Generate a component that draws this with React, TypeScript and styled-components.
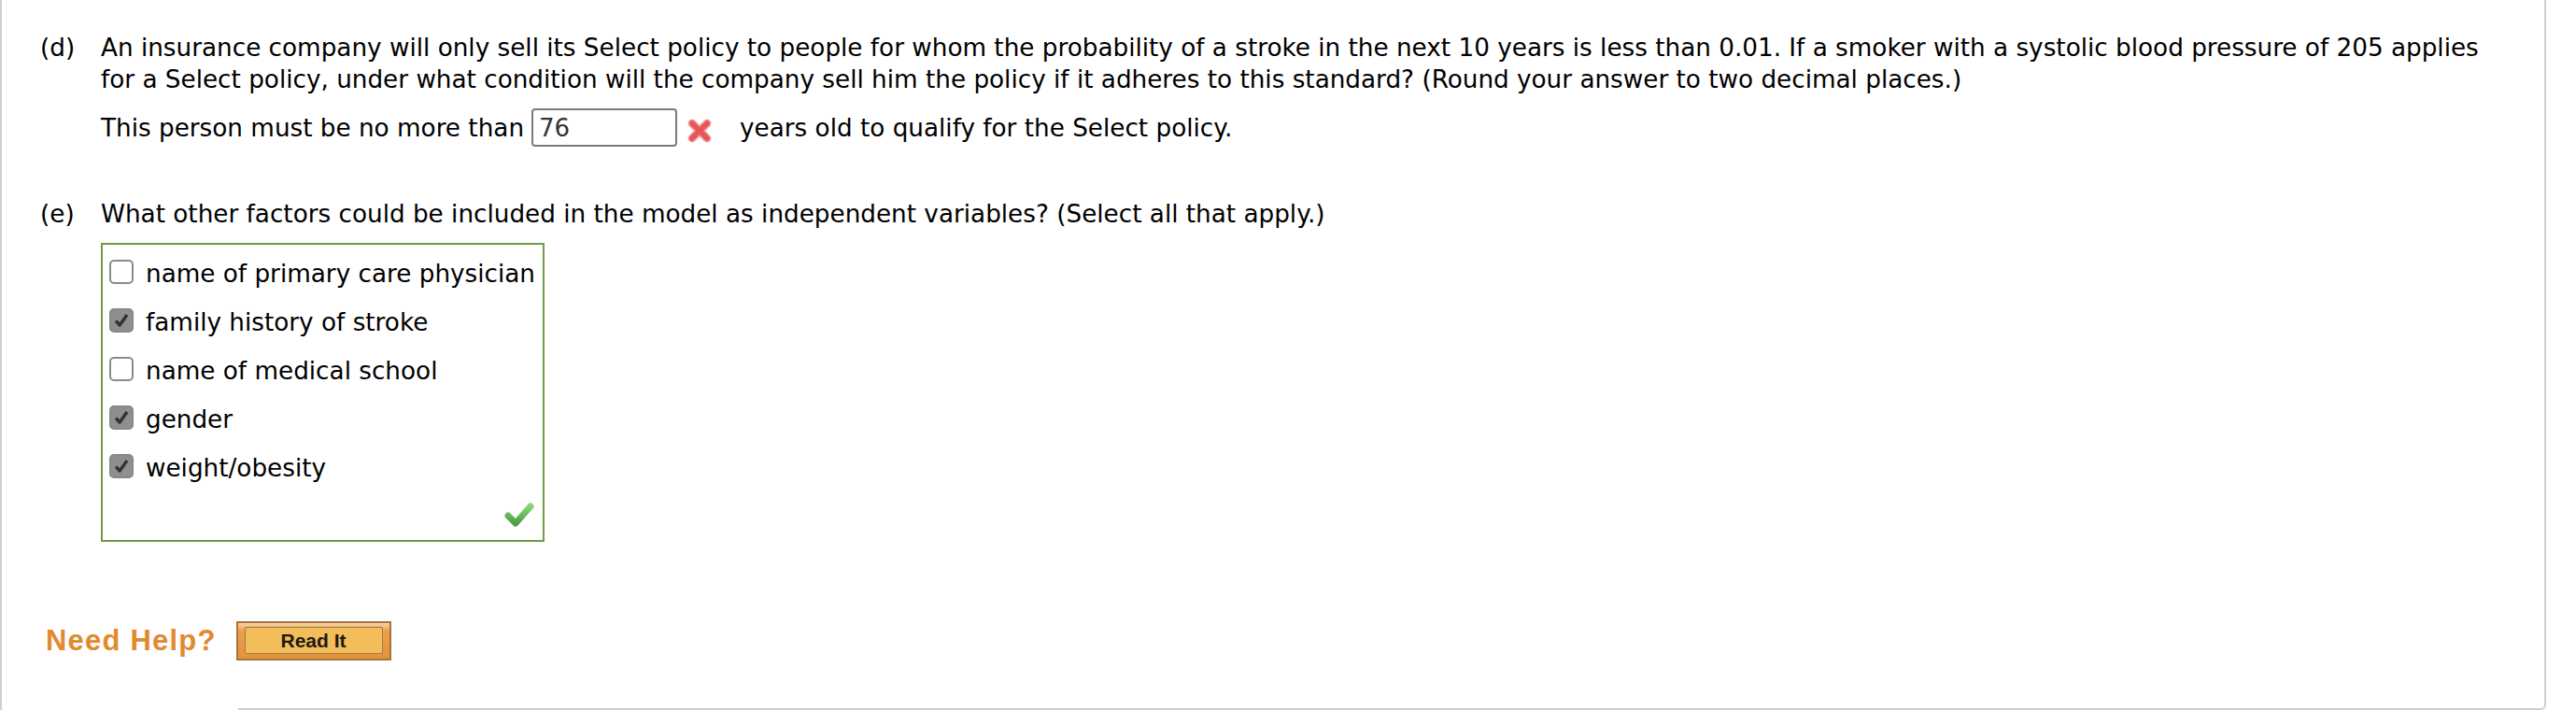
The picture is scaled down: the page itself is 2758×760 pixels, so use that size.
import React from "react";
import styled, { createGlobalStyle } from "styled-components";

const Global = createGlobalStyle`
  html, body { margin: 0; padding: 0; background: #ffffff; }
  body { font-family: "DejaVu Sans", Verdana, sans-serif; color: #000; }
`;

const Card = styled.div`
  position: relative;
  box-sizing: border-box;
  width: 2726px;
  height: 760px;
  border-left: 2px solid #cfcfcf;
  border-right: 2px solid #cfcfcf;
  border-bottom: 2px solid #cfcfcf;
  border-bottom-right-radius: 6px;
  padding: 34px 0 0 41px;
  &::after {
    content: "";
    position: absolute;
    left: 0;
    bottom: -2px;
    width: 253px;
    height: 2px;
    background: #ffffff;
  }
`;

const Part = styled.div<{ $top: number }>`
  display: grid;
  grid-template-columns: 65px 1fr;
  margin-top: ${(p) => p.$top}px;
  font-size: 26.25px;
  line-height: 34px;
`;

const PartLabel = styled.div`
  font-size: 26.25px;
  line-height: 34px;
`;

const PartBody = styled.div`
  display: flex;
  flex-direction: column;
  align-items: flex-start;
`;

const Para = styled.p`
  margin: 0;
  font-size: 26.25px;
  line-height: 34px;
`;

const AnswerRow = styled.div`
  display: flex;
  align-items: center;
  height: 41px;
  margin-top: 14px;
  white-space: nowrap;
`;

const AnswerInput = styled.input`
  box-sizing: border-box;
  width: 156px;
  height: 41px;
  margin-left: 8px;
  padding: 0 6px;
  border: 2px solid #7b7b7b;
  border-radius: 4px;
  font-family: "DejaVu Sans", Verdana, sans-serif;
  font-size: 26px;
  color: #333;
  background: #fff;
  outline: none;
`;

const WrongMark = styled.svg`
  width: 28px;
  height: 28px;
  margin-left: 10px;
  margin-top: 6px;
  flex: none;
`;

const TrailText = styled.span`
  margin-left: 29px;
`;

const ChoiceBox = styled.div`
  display: inline-flex;
  flex-direction: column;
  gap: 18px;
  margin-top: 14px;
  padding: 14px 8px 14px 7px;
  border: 2px solid #6e9c45;
`;

const ChoiceRow = styled.label`
  display: flex;
  align-items: center;
  height: 34px;
  font-size: 26.25px;
  line-height: 34px;
  white-space: nowrap;
`;

const Box = styled.span<{ $checked: boolean }>`
  box-sizing: border-box;
  display: inline-flex;
  align-items: center;
  justify-content: center;
  width: 26px;
  height: 26px;
  margin: 0 13px 5px 0;
  border: 2px solid ${(p) => (p.$checked ? "#888888" : "#8a8a8a")};
  border-radius: 5px;
  background: ${(p) => (p.$checked ? "#8f8f8f" : "#ffffff")};
  flex: none;
`;

const CorrectMark = styled.svg`
  align-self: flex-end;
  width: 32px;
  height: 26px;
  margin: 2px 1px 0 0;
`;

const HelpRow = styled.div`
  display: flex;
  align-items: center;
  gap: 21px;
  margin: 85px 0 0 6px;
`;

const HelpText = styled.span`
  font-family: "Liberation Sans", Arial, sans-serif;
  font-weight: bold;
  font-size: 31px;
  letter-spacing: 1.2px;
  color: #e2892f;
  line-height: 42px;
`;

const ReadButton = styled.button`
  box-sizing: border-box;
  display: flex;
  align-items: stretch;
  width: 166px;
  height: 42px;
  padding: 4px 7px 5px 7px;
  border: 2px solid #a7723e;
  background: linear-gradient(#f7d4a4 0%, #eba04c 22%, #e5923a 100%);
  cursor: pointer;
`;

const ReadInner = styled.span`
  flex: 1;
  display: flex;
  align-items: center;
  justify-content: center;
  border: 1px solid #a07a4a;
  border-radius: 2px;
  background: #f3bd59;
  font-family: "Liberation Sans", Arial, sans-serif;
  font-weight: bold;
  font-size: 21px;
  color: #1c1a14;
`;

const choices = [
  { label: "name of primary care physician", checked: false },
  { label: "family history of stroke", checked: true },
  { label: "name of medical school", checked: false },
  { label: "gender", checked: true },
  { label: "weight/obesity", checked: true },
];

function CheckBox({ checked }: { checked: boolean }) {
  return (
    <Box $checked={checked}>
      {checked && (
        <svg width="18" height="18" viewBox="0 0 18 18">
          <path d="M3 9.5 L7.2 14 L15 3" fill="none" stroke="#333333" strokeWidth="3.4" strokeLinejoin="round" />
        </svg>
      )}
    </Box>
  );
}

export default function App() {
  return (
    <>
      <Global />
      <Card>
        <Part $top={0}>
          <PartLabel>(d)</PartLabel>
          <PartBody>
            <Para>
              An insurance company will only sell its Select policy to people for whom the probability of a stroke in the next 10 years is less than 0.01. If a smoker with a systolic blood pressure of 205 applies
              <br />
              for a Select policy, under what condition will the company sell him the policy if it adheres to this standard? (Round your answer to two decimal places.)
            </Para>
            <AnswerRow>
              <span>This person must be no more than</span>
              <AnswerInput defaultValue="76" />
              <WrongMark viewBox="0 0 28 28">
                <path d="M6 6 L22 22 M22 6 L6 22" stroke="#f3a7a7" strokeWidth="9" strokeLinecap="round" />
                <path d="M6 6 L22 22 M22 6 L6 22" stroke="#e4585a" strokeWidth="6" strokeLinecap="round" />
              </WrongMark>
              <TrailText>years old to qualify for the Select policy.</TrailText>
            </AnswerRow>
          </PartBody>
        </Part>
        <Part $top={55}>
          <PartLabel>(e)</PartLabel>
          <PartBody>
            <Para>What other factors could be included in the model as independent variables? (Select all that apply.)</Para>
            <ChoiceBox>
              {choices.map((c) => (
                <ChoiceRow key={c.label}>
                  <CheckBox checked={c.checked} />
                  {c.label}
                </ChoiceRow>
              ))}
              <CorrectMark viewBox="0 0 32 26">
                <defs>
                  <linearGradient id="okg" x1="0" y1="0" x2="0" y2="1">
                    <stop offset="0" stopColor="#8ad27c" />
                    <stop offset="1" stopColor="#4e9e44" />
                  </linearGradient>
                </defs>
                <path d="M4 14 L12 22 L28 4" fill="none" stroke="url(#okg)" strokeWidth="7" strokeLinejoin="round" strokeLinecap="round" />
              </CorrectMark>
            </ChoiceBox>
          </PartBody>
        </Part>
        <HelpRow>
          <HelpText>Need Help?</HelpText>
          <ReadButton type="button">
            <ReadInner>Read It</ReadInner>
          </ReadButton>
        </HelpRow>
      </Card>
    </>
  );
}
